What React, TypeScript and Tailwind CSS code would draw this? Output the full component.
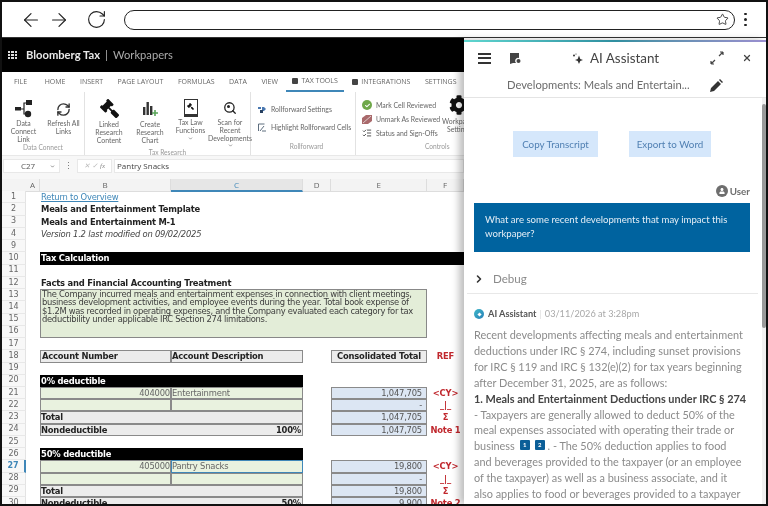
import React from "react";
import { ArrowLeft, ArrowRight, RotateCw, Star, RefreshCw, Search, ListChecks, X, ChevronRight, ChevronDown } from "lucide-react";
import { FaGavel, FaCog, FaCheck, FaUser } from "react-icons/fa";

const sheetFont = "font-['DejaVu_Sans',sans-serif]";

function Tab({ children, icon, active, cls = "" }: { children: string; icon?: boolean; active?: boolean; cls?: string }) {
  return (
    <div className={`relative flex items-center gap-[3px] h-full ${active ? "border-b-2 border-[#3f87b8] px-[6px] -mx-[6px]" : ""} ${cls}`}>
      {icon && <span className="w-[6px] h-[6px] bg-[#444] rounded-[1px]" />}
      <span>{children}</span>
    </div>
  );
}

function RibbonBtn({ w, icon, lines, caret, top }: { w: string; icon: React.ReactNode; lines: string[]; caret?: boolean; top: string }) {
  return (
    <div className={`flex flex-col items-center shrink-0 ${w}`}>
      <div className={`flex items-center justify-center ${top}`}>{icon}</div>
      {lines.map((l) => (
        <div key={l} className="leading-[7.8px] whitespace-nowrap">{l}</div>
      ))}
      {caret && <ChevronDown size={5} strokeWidth={3} className="mt-[1px]" />}
    </div>
  );
}

function Ribbon() {
  return (
    <div className="flex h-[64px] shrink-0 bg-white text-[6.9px] text-[#666] font-['Lato',sans-serif] border-b border-[#e8e8e8]">
      <div className="w-[83px] shrink-0 border-r border-[#e2e2e2] flex flex-col items-center">
        <div className="flex flex-1 pt-[6px] pl-[1px]">
          <RibbonBtn w="w-[40px]" top="h-[22px]" lines={["Data", "Connect", "Link"]} icon={
            <svg width="18" height="18" viewBox="0 0 18 18" fill="#222">
              <rect x="0" y="7" width="6" height="3.5" />
              <rect x="11" y="0" width="6" height="5" />
              <circle cx="13" cy="14" r="3.2" />
              <path d="M5 9h4V3h3M9 9v5h2" stroke="#222" fill="none" strokeWidth="1.2" />
            </svg>
          } />
          <RibbonBtn w="w-[40px]" top="h-[22px]" lines={["Refresh All", "Links"]} icon={<RefreshCw size={15} strokeWidth={2.2} className="text-[#333]" />} />
        </div>
        <div className="text-[6.6px] text-[#999] pb-[3px]">Data Connect</div>
      </div>
      <div className="w-[166px] shrink-0 border-r border-[#e2e2e2] flex flex-col items-center">
        <div className="flex flex-1 pt-[4px] pl-[2px]">
          <RibbonBtn w="w-[42px]" top="h-[25px]" lines={["Linked", "Research", "Content"]} icon={<FaGavel size={19} className="text-[#111] -scale-x-100" />} />
          <RibbonBtn w="w-[40px]" top="h-[25px]" lines={["Create", "Research", "Chart"]} icon={
            <svg width="17" height="16" viewBox="0 0 17 16">
              <rect x="1" y="6" width="2.4" height="8" fill="#333" />
              <rect x="4.5" y="1" width="2.4" height="13" fill="#333" />
              <rect x="8" y="5" width="2.4" height="9" fill="#333" />
              <path d="M13 9v6M10 12h6" stroke="#5aa55a" strokeWidth="1.6" />
            </svg>
          } />
          <RibbonBtn w="w-[41px]" top="h-[23px]" lines={["Tax Law", "Functions"]} caret icon={
            <div className="w-[14px] h-[18px] border border-[#333] border-b-[3px] flex items-center justify-center">
              <FaGavel size={7} className="text-[#111] -scale-x-100" />
            </div>
          } />
          <RibbonBtn w="w-[38px]" top="h-[23px]" lines={["Scan for", "Recent", "Developments"]} caret icon={
            <div className="relative">
              <Search size={14} strokeWidth={2.2} className="text-[#222]" />
              <span className="absolute left-[4px] top-[4px] w-[3px] h-[3px] bg-[#222] rounded-full" />
            </div>
          } />
        </div>
        <div className="text-[6.6px] text-[#999] pb-[3px]">Tax Research</div>
      </div>
      <div className="w-[105px] shrink-0 border-r border-[#e2e2e2] flex flex-col pl-[7px]">
        <div className="flex flex-col gap-[9px] pt-[13px] flex-1 whitespace-nowrap">
          <div className="flex items-center gap-[5px] h-[9px]">
            <svg width="8" height="7" viewBox="0 0 8 7"><path d="M0 1h3v2H0zM4 1h2l2 2-2 2H4z" fill="#4a78b0" /><path d="M2 4h3v3H2z" fill="#27405f" /></svg>
            <span>Rollforward Settings</span>
          </div>
          <div className="flex items-center gap-[5px] h-[9px]">
            <svg width="8" height="9" viewBox="0 0 8 9"><path d="M.5 8V1h6M2 8l4-5M4 8h4" stroke="#4c5d70" fill="none" strokeWidth=".9" /></svg>
            <span>Highlight Rollforward Cells</span>
          </div>
        </div>
        <div className="text-[6.6px] text-[#999] text-center pb-[3px]">Rollforward</div>
      </div>
      <div className="flex-1 min-w-0 overflow-hidden flex flex-col pl-[6px] relative">
        <div className="flex flex-col gap-[4px] pt-[8px] flex-1 whitespace-nowrap">
          <div className="flex items-center gap-[4px] h-[10px]">
            <span className="w-[10px] h-[10px] rounded-full bg-[#6fa84a] flex items-center justify-center"><FaCheck size={5} className="text-white" /></span>
            <span>Mark Cell Reviewed</span>
          </div>
          <div className="flex items-center gap-[4px] h-[10px]">
            <svg width="10" height="9" viewBox="0 0 10 9"><path d="M0 9V3l4-3h6v6L6 9z" fill="#a9696b" /><path d="M1 8 9 1" stroke="#dcc" strokeWidth="1" /></svg>
            <span>Unmark As Reviewed</span>
          </div>
          <div className="flex items-center gap-[4px] h-[10px]">
            <ListChecks size={10} strokeWidth={2} className="text-[#333]" />
            <span>Status and Sign-Offs</span>
          </div>
        </div>
        <div className="text-[6.6px] text-[#999] pb-[3px] pl-[63px]">Controls</div>
        <div className="absolute left-[86px] top-[3px] flex flex-col items-center w-[34px] whitespace-nowrap">
          <FaCog size={20} className="text-[#111]" />
          <div className="leading-[8px] mt-[2px]">Workpaper</div>
          <div className="leading-[8px]">Settings</div>
        </div>
      </div>
    </div>
  );
}

function FormulaBar() {
  return (
    <div className="h-[23px] shrink-0 bg-[#f7f7f7] flex items-start pt-[3px] text-[#555]">
      <div className="w-[57px] h-[14px] bg-white border border-[#e8e8e8] flex items-center justify-between pl-[17px] pr-[4px] text-[8px] font-['Open_Sans',sans-serif] ml-[1px]">
        <span>C27</span>
        <ChevronDown size={5} strokeWidth={3} />
      </div>
      <div className="w-[17px] text-center text-[9px] text-[#777] leading-[14px]">⋮</div>
      <div className="w-[35px] h-[14px] bg-white border border-[#e8e8e8] flex items-center justify-center gap-[2px] text-[7px] text-[#bbb] font-['Liberation_Serif',serif] italic">
        <span>✕</span><span>✓</span><span className="text-[#8a8a8a]">fx</span>
      </div>
      <div className="flex-1 h-[14px] ml-[2px] bg-white border border-[#e8e8e8] pl-[2px] flex items-center text-[8px] font-['Open_Sans',sans-serif] text-[#444]">Pantry Snacks</div>
    </div>
  );
}

function RH({ n, sel }: { n: number; sel?: boolean }) {
  return (
    <div className={`col-start-1 flex items-center justify-center text-[8px] tracking-normal bg-[#f8f8f8] border-b border-[#e8e8e8] ${sel ? "text-[#3f87b8] font-semibold border-r-2 border-r-[#3f87b8] bg-[#eaeaea]" : "text-[#666] border-r border-r-[#e3e3e3]"}`}>
      {n}
    </div>
  );
}

const bd = "border border-[#8a8a8a]";
const gr = "bg-[#e9f2df]";
const gy = "bg-[#ececec]";
const bl = "bg-[#dce6f3]";

function EC({ v, cls = "" }: { v?: string; cls?: string }) {
  return <div className={`col-start-6 ${bl} ${bd} text-right pr-[4px] text-[#555] leading-[11px] whitespace-nowrap ${cls}`}>{v}</div>;
}
function FC({ v }: { v: string }) {
  return <div className="col-start-7 text-center text-[#c0272d] font-bold leading-[12px] whitespace-nowrap">{v}</div>;
}

function Section({ start, title, num, desc, pct, val, val2, note, sel }: { start: number; title: string; num: string; desc: string; pct: string; val: string; val2: string; note: string; sel?: boolean }) {
  return (
    <>
      <RH n={start} />
      <div className="col-start-3 col-span-2 bg-black text-white font-bold pl-[1px] leading-[12px] whitespace-nowrap">{title}</div>
      <RH n={start + 1} sel={sel} />
      <div className={`col-start-3 ${gr} ${bd} text-right text-[#666] leading-[11px]`}>{num}</div>
      <div className={`col-start-4 ${gr} text-[#666] leading-[11px] border ${sel ? "border-[#3f87b8]" : "border-[#8a8a8a]"}`}>{desc}</div>
      <EC v={val} />
      <FC v="<CY>" />
      <RH n={start + 2} />
      <div className={`col-start-3 ${gr} ${bd}`} />
      <div className={`col-start-4 ${gr} ${bd}`} />
      <EC v="-" />
      <FC v="_|_" />
      <RH n={start + 3} />
      <div className={`col-start-3 col-span-2 ${gy} ${bd} font-bold text-[#222] leading-[11px]`}>Total</div>
      <EC v={val} />
      <FC v="Σ" />
      <RH n={start + 4} />
      <div className={`col-start-3 ${gy} ${bd} border-r-0 font-bold text-[#222] leading-[11px]`}>Nondeductible</div>
      <div className={`col-start-4 ${gy} ${bd} border-l-0 font-bold text-right text-[#222] leading-[11px] pr-[1px]`}>{pct}</div>
      <EC v={val2} />
      <FC v={note} />
    </>
  );
}

function Sheet() {
  return (
    <div className={`flex-1 min-h-0 overflow-hidden bg-white ${sheetFont} text-[8.4px] tracking-[-0.2px]`}>
      <div className="grid grid-cols-[24px_14px_131px_132px_28px_96px_37px] auto-rows-[12.24px]">
        {/* column headers */}
        <div className="col-start-1 h-[13px] bg-[#f3f3f3] border-b border-[#ddd]" />
        {["A", "B", "C", "D", "E", "F"].map((c) => (
          <div key={c} className={`h-[13px] flex items-center justify-center text-[8px] border-b border-r border-r-[#ddd] font-['Open_Sans',sans-serif] ${c === "C" ? "bg-[#e6e6e6] text-[#3f87b8] border-b-2 border-b-[#3f87b8]" : "bg-[#f3f3f3] text-[#666] border-b-[#ddd]"}`}>{c}</div>
        ))}
        <RH n={1} />
        <div className="col-start-3 col-span-2 text-[#3f87b8] underline whitespace-nowrap leading-[13px] pl-[1px]">Return to Overview</div>
        <RH n={2} />
        <div className="col-start-3 col-span-2 font-bold text-[#222] whitespace-nowrap leading-[13px] pl-[1px]">Meals and Entertainment Template</div>
        <RH n={3} />
        <div className="col-start-3 col-span-2 font-bold text-[#222] whitespace-nowrap leading-[13px] pl-[1px]">Meals and Entertainment M-1</div>
        <RH n={4} />
        <div className="col-start-3 col-span-2 italic text-[#444] whitespace-nowrap leading-[13px] pl-[1px]">Version 1.2 last modified on 09/02/2025</div>
        <RH n={9} />
        <RH n={10} />
        <div className="col-start-3 col-span-5 bg-black text-white font-bold pl-[1px] leading-[12px] whitespace-nowrap">Tax Calculation</div>
        <RH n={11} />
        <RH n={12} />
        <div className="col-start-3 col-span-3 font-bold text-[#222] whitespace-nowrap leading-[13px] pl-[1px]">Facts and Financial Accounting Treatment</div>
        <RH n={13} />
        <div className="col-start-3 col-span-4 row-span-4 bg-[#e3edd8] border border-[#888] text-[#3d3d3d] leading-[8.3px] pl-[1px] tracking-[-0.3px] whitespace-nowrap overflow-hidden">
          <div>The Company incurred meals and entertainment expenses in connection with client meetings,</div>
          <div>business development activities, and employee events during the year. Total book expense of</div>
          <div>$1.2M was recorded in operating expenses, and the Company evaluated each category for tax</div>
          <div>deductibility under applicable IRC Section 274 limitations.</div>
        </div>
        <RH n={14} />
        <RH n={15} />
        <RH n={16} />
        <RH n={17} />
        <RH n={18} />
        <div className={`col-start-3 ${gy} ${bd} font-bold text-[#222] leading-[11px] pl-[1px] whitespace-nowrap`}>Account Number</div>
        <div className={`col-start-4 ${gy} ${bd} font-bold text-[#222] leading-[11px] whitespace-nowrap`}>Account Description</div>
        <div className={`col-start-6 ${gy} ${bd} font-bold text-[#222] leading-[11px] text-center whitespace-nowrap`}>Consolidated Total</div>
        <FC v="REF" />
        <RH n={19} />
        <Section start={20} title="0% deductible" num="404000" desc="Entertainment" pct="100%" val="1,047,705" val2="1,047,705" note="Note 1" />
        <RH n={25} />
        <Section start={26} title="50% deductible" num="405000" desc="Pantry Snacks" pct="50%" val="19,800" val2="9,900" note="Note 2" sel />
      </div>
    </div>
  );
}

function Panel() {
  return (
    <div className="relative w-[302px] shrink-0 mt-[2px] bg-white overflow-hidden shadow-[-5px_0_7px_rgba(0,0,0,0.25)] font-['Lato',sans-serif] flex flex-col">
      <div className="h-[2px] shrink-0 bg-gradient-to-r from-[#5fd6cf] via-[#2f8fa0] to-[#9a8fd0]" />
      <div className="h-[56px] shrink-0 border-b border-[#e4e4e4] text-[#555]">
        <div className="flex items-center h-[28px] pl-[14px] mt-[2px]">
          <div className="w-[13px] flex flex-col gap-[2.5px]">
            <span className="h-[2px] bg-[#333]" /><span className="h-[2px] bg-[#333]" /><span className="h-[2px] bg-[#333]" />
          </div>
          <svg className="ml-[19px]" width="11" height="11" viewBox="0 0 11 11"><path d="M0 0h9v5a3 3 0 0 0-3 5H3l-3 1z" fill="#444" /><circle cx="8.5" cy="8" r="2" fill="#444" /></svg>
          <svg className="ml-[51px]" width="11" height="11" viewBox="0 0 11 11" fill="#333"><path d="M7 2.5 8.3 6 11 7 8.3 8 7 11 5.7 8 3 7l2.7-1z" /><circle cx="2" cy="2.5" r="1" /><circle cx="4" cy="1" r=".6" /></svg>
          <span className="ml-[7px] w-[70px] text-[13.4px] text-[#444] whitespace-nowrap">AI Assistant</span>
          <svg className="ml-[50px]" width="14" height="14" viewBox="0 0 14 14"><path d="M13 1 9 5M13 1H10M13 1v3M1 13l4-4M1 13h3M1 13v-3" stroke="#444" strokeWidth="1.2" fill="none" /></svg>
          <X size={10} strokeWidth={3} className="ml-[18px] text-[#444]" />
        </div>
        <div className="flex items-center h-[20px] pl-[43px] mt-[3px]">
          <span className="text-[11.2px] text-[#6b6b6b] w-[203px] whitespace-nowrap">Developments: Meals and Entertain...</span>
          <svg width="13" height="13" viewBox="0 0 13 13"><path d="M0 13l1-4 7-7 3 3-7 7zM9 1l1-1 3 3-1 1z" fill="#333" /></svg>
        </div>
      </div>
      <div className="flex flex-col pl-[10px] pr-[16px]">
        <div className="flex mt-[33px] ml-[39px] gap-[31px]">
          <button className="w-[85px] h-[26px] bg-[#d5e7fb] text-[#4f7fb2] text-[9.8px] whitespace-nowrap">Copy Transcript</button>
          <button className="w-[82px] h-[26px] bg-[#d5e7fb] text-[#4f7fb2] text-[9.8px] whitespace-nowrap">Export to Word</button>
        </div>
        <div className="flex items-center justify-end gap-[2px] mt-[28px] h-[12px] text-[9.8px] font-bold text-[#6e6e6e]">
          <span className="w-[12px] h-[12px] rounded-full bg-[#6e6e6e] flex items-center justify-center"><FaUser size={6} className="text-white" /></span>
          <span>User</span>
        </div>
        <div className="mt-[6px] w-[276px] h-[49px] bg-[#00639f] text-[#e4eef6] text-[9.6px] leading-[14px] pl-[11px] pt-[10px] pr-[10px]">
          <div>What are some recent developments that may impact this</div>
          <div>workpaper?</div>
        </div>
        <div className="flex items-center mt-[20px] h-[14px] text-[11.6px] text-[#8a8a8a]">
          <ChevronRight size={12} strokeWidth={3.2} className="text-[#333] -ml-[1px]" />
          <span className="ml-[8px]">Debug</span>
        </div>
        <div className="h-px bg-[#e8e8e8] -ml-[7px] mt-[7px] w-[291px]" />
        <div className="flex items-center mt-[14px] h-[12px] text-[9.2px] whitespace-nowrap">
          <span className="w-[10px] h-[10px] rounded-full bg-gradient-to-br from-[#3fb8c8] to-[#2a7fb8] flex items-center justify-center"><span className="w-[3px] h-[3px] bg-white rotate-45" /></span>
          <span className="ml-[4px] font-bold text-[#555]">AI Assistant</span>
          <span className="ml-[3px] text-[#ddd]">|</span>
          <span className="ml-[3px] text-[#a8a8a8]">03/11/2026 at 3:28pm</span>
        </div>
        <div className="mt-[7px] text-[10.9px] leading-[15.9px] text-[#8b8b8b] w-[280px] whitespace-nowrap">
          <div>Recent developments affecting meals and entertainment</div>
          <div>deductions under IRC § 274, including sunset provisions</div>
          <div>for IRC § 119 and IRC § 132(e)(2) for tax years beginning</div>
          <div>after December 31, 2025, are as follows:</div>
          <div className="font-bold text-[#444]">1. Meals and Entertainment Deductions under IRC § 274</div>
          <div>- Taxpayers are generally allowed to deduct 50% of the</div>
          <div>meal expenses associated with operating their trade or</div>
          <div className="flex items-center whitespace-pre">
            business
            <span className="ml-[5px] -mt-[3px] w-[10px] h-[10px] bg-[#0b5f98] rounded-[1px] text-white text-[6px] font-bold leading-[10px] text-center">1</span>
            <span className="ml-[5px] -mt-[3px] w-[10px] h-[10px] bg-[#0b5f98] rounded-[1px] text-white text-[6px] font-bold leading-[10px] text-center">2</span>
            <span> . - The 50% deduction applies to food</span>
          </div>
          <div>and beverages provided to the taxpayer (or an employee</div>
          <div>of the taxpayer) as well as a business associate, and it</div>
          <div>also applies to food or beverages provided to a taxpayer</div>
          <div>during a business meal with a client or customer of the</div>
        </div>
      </div>
      <div className="absolute right-0 top-[58px] bottom-0 w-[4px] bg-[#f1f1f1]">
        <div className="h-[224px] mt-[6px] bg-[#9a9a9a] rounded-full" />
      </div>
    </div>
  );
}

export default function App() {
  return (
    <div className="w-[768px] h-[506px] overflow-hidden bg-white border-2 border-[#111] flex flex-col blur-[0.35px]">
      <div className="h-[36px] shrink-0 flex items-center border-b border-[#333] text-[#222]">
        <ArrowLeft size={22} strokeWidth={1.3} className="ml-[18px]" />
        <ArrowRight size={22} strokeWidth={1.3} className="ml-[6px]" />
        <RotateCw size={21} strokeWidth={1.3} className="ml-[16px]" />
        <div className="ml-[17px] w-[611px] h-[20px] rounded-full border-[1.5px] border-[#222] flex items-center justify-end pr-[5px]">
          <Star size={13} strokeWidth={1.5} />
        </div>
        <div className="ml-[9px] flex flex-col gap-[3px]">
          <span className="w-[2.5px] h-[2.5px] rounded-full bg-[#222]" />
          <span className="w-[2.5px] h-[2.5px] rounded-full bg-[#222]" />
          <span className="w-[2.5px] h-[2.5px] rounded-full bg-[#222]" />
        </div>
      </div>
      <div className="flex flex-1 min-h-0">
        <div className="flex-1 min-w-0 flex flex-col">
          <div className="h-[34px] shrink-0 bg-black flex items-center text-white font-['Lato',sans-serif]">
            <div className="ml-[6px] grid grid-cols-3 gap-[1px] w-[9px]">
              {Array.from({ length: 9 }).map((_, i) => <span key={i} className="h-[2px] bg-[#ddd]" />)}
            </div>
            <span className="ml-[9px] text-[11.2px] font-bold text-[#e8e8e8] whitespace-nowrap">Bloomberg Tax</span>
            <span className="ml-[5px] text-[12px] text-[#aaa]">|</span>
            <span className="ml-[5px] text-[11.2px] text-[#aaa]">Workpapers</span>
          </div>
          <div className="h-[20px] shrink-0 bg-white flex items-center pl-[12px] gap-[14.5px] text-[7px] text-[#666] font-['Open_Sans',sans-serif] whitespace-nowrap overflow-hidden">
            <Tab cls="mr-[3px]">FILE</Tab>
            <Tab>HOME</Tab>
            <Tab>INSERT</Tab>
            <Tab>PAGE LAYOUT</Tab>
            <Tab>FORMULAS</Tab>
            <Tab>DATA</Tab>
            <Tab>VIEW</Tab>
            <Tab icon active>TAX TOOLS</Tab>
            <Tab icon>INTEGRATIONS</Tab>
            <Tab>SETTINGS</Tab>
          </div>
          <Ribbon />
          <FormulaBar />
          <Sheet />
        </div>
        <Panel />
      </div>
    </div>
  );
}
